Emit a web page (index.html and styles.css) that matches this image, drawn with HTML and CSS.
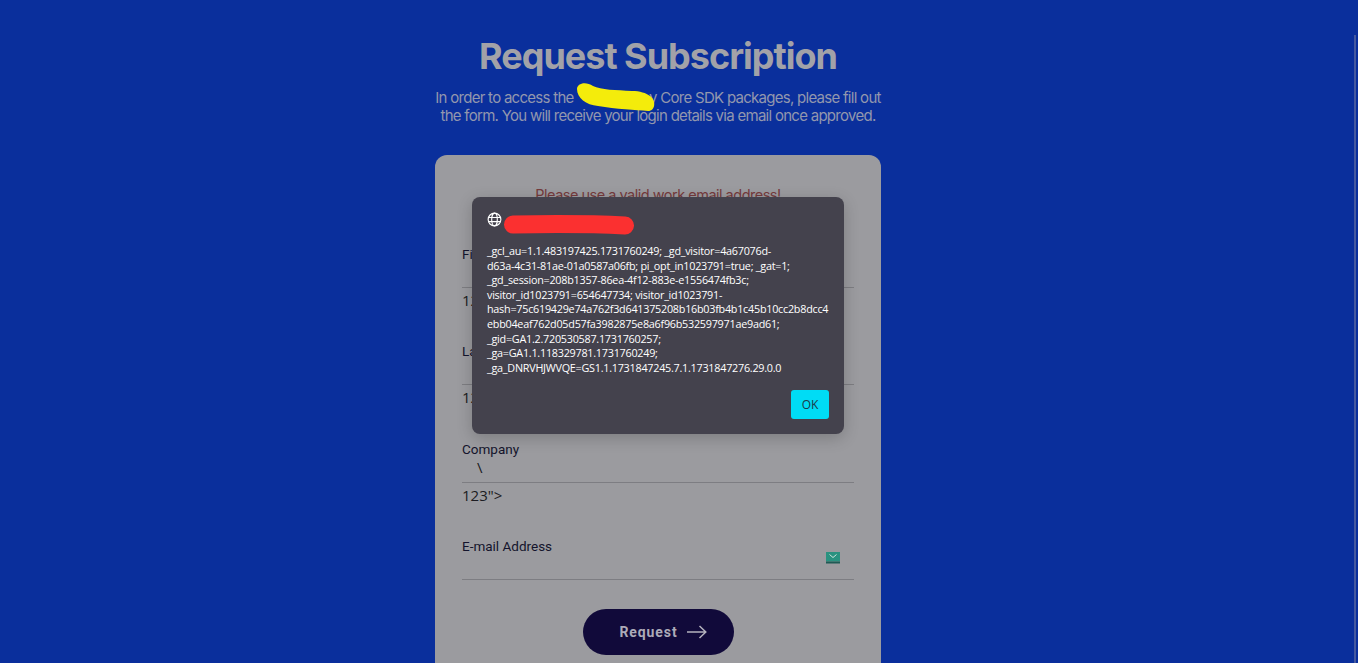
FILE: index.html
```html
<!DOCTYPE html>
<html>
<head>
  <meta charset="UTF-8">
  <title>Request Subscription</title>
  <link rel="stylesheet" href="styles.css">
</head>
<body>
  <div class="page">
    <h1>Request Subscription</h1>
    <p class="intro">In order to access the <span class="masked"></span>y Core SDK packages, please fill out<br>the form. You will receive your login details via email once approved.</p>

    <div class="card">
      <div class="form-error">Please use a valid work email address!</div>

      <div class="field">
        <label>First name</label>
        <div class="field-input"></div>
        <div class="field-value">123"&gt;</div>
      </div>
      <div class="field">
        <label>Last name</label>
        <div class="field-input"></div>
        <div class="field-value">123"&gt;</div>
      </div>
      <div class="field">
        <label>Company</label>
        <div class="field-input"><span class="typed">\</span></div>
        <div class="field-value">123"&gt;</div>
      </div>
      <div class="field">
        <label>E-mail Address</label>
        <div class="field-input">
          <svg class="mail-icon" viewBox="0 0 14 12" width="14" height="12">
            <rect x="0" y="0" width="14" height="9.5" fill="#2a9280"/>
            <path d="M3.5 2.5 7 5.5 10.5 2.5" fill="none" stroke="#cfe3dc" stroke-width="1"/>
            <rect x="0" y="9.5" width="14" height="2" fill="#1f5a55"/>
          </svg>
        </div>
      </div>

      <div class="actions">
        <button class="request-btn">
          Request
          <svg viewBox="0 0 20 14" width="20" height="14">
            <path d="M0 7H18.5M12.5 1 18.8 7 12.5 13" fill="none" stroke="#b4b2bd" stroke-width="1.5"/>
          </svg>
        </button>
      </div>
    </div>
  </div>

  <!-- yellow marker over the product name -->
  <svg class="scribble-yellow" viewBox="0 0 80 31" width="80" height="31">
    <path d="M1 8C1 2 10 0 17 5 25 9 40 9 56 10 64 10 70 12 74 15 80 19 80 30 72 30 60 29 40 28 22 25 10 24 1 17 1 8Z" fill="#f4ec0b"/>
  </svg>

  <div class="scrollbar"></div>

  <div class="dialog">
    <div class="dialog-host">
      <svg viewBox="0 0 16 16" width="15" height="15">
        <g fill="none" stroke="#fff" stroke-width="1.200">
          <circle cx="8" cy="8" r="6.800"/>
          <ellipse cx="8" cy="8" rx="3" ry="6.800"/>
          <path d="M1.500 5.800H14.500M1.500 10.200H14.500"/>
        </g>
      </svg>
      <svg class="scribble-red" viewBox="0 0 130 20" width="130" height="20">
        <path d="M9 9.500C40 9 90 9 121 10.500" fill="none" stroke="#fb3030" stroke-width="18" stroke-linecap="round"/>
      </svg>
    </div>
    <div class="dialog-text">_gcl_au=1.1.483197425.1731760249; _gd_visitor=4a67076d-
d63a-4c31-81ae-01a0587a06fb; pi_opt_in1023791=true; _gat=1;
_gd_session=208b1357-86ea-4f12-883e-e1556474fb3c;
visitor_id1023791=654647734; visitor_id1023791-
hash=75c619429e74a762f3d641375208b16b03fb4b1c45b10cc2b8dcc4
ebb04eaf762d05d57fa3982875e8a6f96b532597971ae9ad61;
_gid=GA1.2.720530587.1731760257;
_ga=GA1.1.118329781.1731760249;
_ga_DNRVHJWVQE=GS1.1.1731847245.7.1.1731847276.29.0.0</div>
    <div class="dialog-actions">
      <button class="ok-btn">OK</button>
    </div>
  </div>
</body>
</html>
```

FILE: styles.css
```css
html, body {
  margin: 0;
  height: 100%;
  overflow: hidden;
}
body {
  font-family: "Inter", "Liberation Sans", sans-serif;
  background-color: #0a2f9c;
  position: relative;
}
.page {
  width: 446px;
  margin-left: 435px;
}
h1 {
  margin: 0;
  padding-top: 33px;
  font-size: 36px;
  line-height: 47px;
  font-weight: 700;
  letter-spacing: -1px;
  color: #a2a2a8;
  text-align: center;
  white-space: nowrap;
}
.intro {
  margin: 0;
  padding-top: 9px;
  font-size: 15px;
  line-height: 18px;
  letter-spacing: -0.72px;
  color: #9297ae;
  text-align: center;
  white-space: nowrap;
}
.masked {
  display: inline-block;
  width: 72px;
}
.card {
  margin-top: 30px;
  height: 600px;
  padding: 30px 27px 0;
  box-sizing: border-box;
  background-color: #9b9b9f;
  border-radius: 12px;
}
.form-error {
  font-size: 14.500px;
  line-height: 20px;
  letter-spacing: -0.5px;
  color: #753a3c;
  text-align: center;
  margin-bottom: 40px;
}
.field {
  height: 97.330px;
}
label {
  display: block;
  font-family: "Roboto", "Inter", sans-serif;
  font-size: 13.500px;
  line-height: 19px;
  color: #14142c;
}
.field-input {
  height: 23px;
  border-bottom: 1px solid #7d7d82;
  position: relative;
}
.typed {
  display: block;
  padding: 1px 0 0 15px;
  font-family: "Open Sans", sans-serif;
  font-size: 15px;
  line-height: 14px;
  color: #1c1c22;
}
.field-value {
  font-family: "Open Sans", sans-serif;
  font-size: 15px;
  line-height: 24px;
  color: #1c1c22;
}
.mail-icon {
  position: absolute;
  right: 14px;
  top: -4px;
}
.actions {
  display: flex;
  justify-content: center;
  margin-top: -25px;
}
.request-btn {
  width: 151px;
  height: 46px;
  display: flex;
  align-items: center;
  justify-content: center;
  gap: 9px;
  padding: 0 0 0 10px;
  border: none;
  border-radius: 23px;
  background-color: #110a3a;
  color: #adabb8;
  font-family: "Roboto", "Inter", sans-serif;
  font-size: 14px;
  font-weight: 700;
  letter-spacing: 0.900px;
}
.scribble-yellow {
  position: absolute;
  left: 576px;
  top: 81px;
}
.scrollbar {
  position: absolute;
  right: 2px;
  top: 35px;
  bottom: 0;
  width: 2px;
  background-color: #45599f;
}
.dialog {
  position: absolute;
  left: 472px;
  top: 197px;
  width: 372px;
  height: 237px;
  box-sizing: border-box;
  padding: 15px;
  background-color: #44424d;
  border-radius: 8px;
  box-shadow: 0 4px 16px rgba(0, 0, 0, 0.2);
  color: #fff;
}
.dialog-host {
  display: flex;
  align-items: flex-start;
  gap: 2px;
  height: 32px;
}
.scribble-red {
  margin-top: 3px;
}
.dialog-text {
  font-family: "Open Sans", sans-serif;
  font-size: 10.800px;
  line-height: 14.600px;
  letter-spacing: -0.25px;
  white-space: pre-line;
  color: #fff;
}
.dialog-actions {
  display: flex;
  justify-content: flex-end;
  margin-top: 15px;
}
.ok-btn {
  width: 38px;
  height: 29px;
  padding: 0;
  border: none;
  border-radius: 3px;
  background-color: #00dcf5;
  color: #1d3a48;
  font-family: "Open Sans", sans-serif;
  font-size: 12px;
}
```
